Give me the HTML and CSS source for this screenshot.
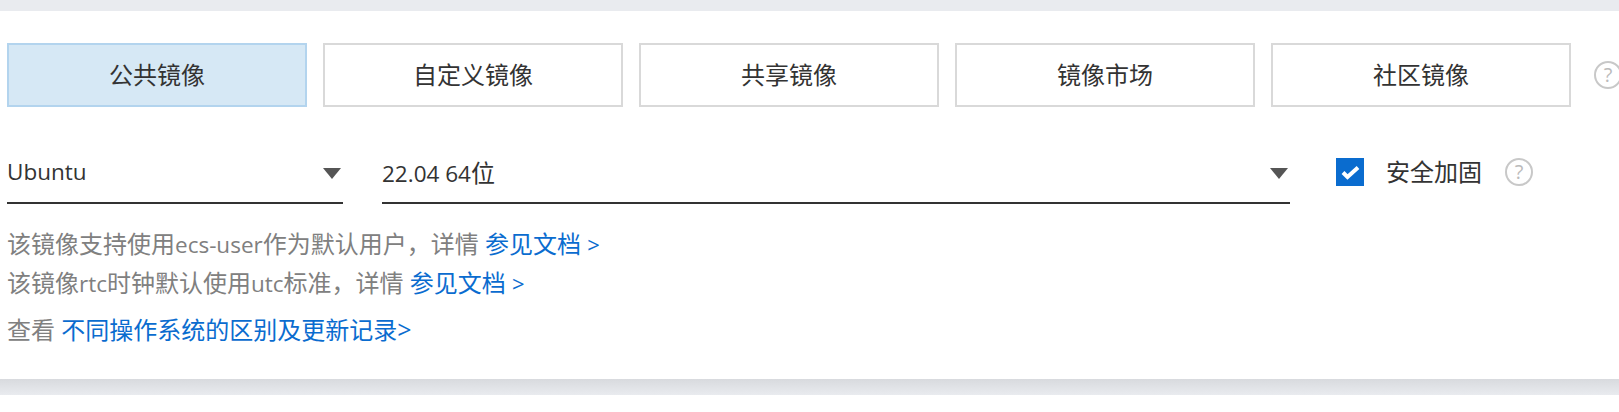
FILE: index.html
```html
<!DOCTYPE html>
<html lang="zh-CN">
<head>
	<meta charset="UTF-8">
	<title>镜像</title>
	<link rel="stylesheet" href="styles.css">
</head>
<body>
	<div class="top-band"></div>
	<div class="panel">
		<div class="tabs">
			<div class="tab active">公共镜像</div>
			<div class="tab">自定义镜像</div>
			<div class="tab">共享镜像</div>
			<div class="tab">镜像市场</div>
			<div class="tab">社区镜像</div>
			<svg class="help help-tabs" viewBox="0 0 28 28"><circle cx="14" cy="14" r="13"/><text x="14" y="21">?</text></svg>
		</div>
		<div class="selects">
			<div class="select os"><span class="lat">Ubuntu</span><i class="caret"></i></div>
			<div class="select version"><span><span class="lat">22.04 64</span>位</span><i class="caret"></i></div>
			<div class="harden">
				<svg class="check" viewBox="0 0 28 28"><rect width="28" height="28"/><path d="M7 14.5l4.5 4.5L22 9.5"/></svg>
				<span class="harden-label">安全加固</span>
				<svg class="help" viewBox="0 0 28 28"><circle cx="14" cy="14" r="13"/><text x="14" y="21">?</text></svg>
			</div>
		</div>
		<div class="notes">
			<div class="note">该镜像支持使用<span class="lat">ecs-user</span>作为默认用户，详情 <a>参见文档 <small>&gt;</small></a></div>
			<div class="note">该镜像<span class="lat">rtc</span>时钟默认使用<span class="lat">utc</span>标准，详情 <a>参见文档 <small>&gt;</small></a></div>
			<div class="note note-last">查看 <a>不同操作系统的区别及更新记录<small>&gt;</small></a></div>
		</div>
	</div>
	<div class="bottom-band"></div>
</body>
</html>
```

FILE: styles.css
```css
body{
	margin:0;
	background:#fff;
	color:#333;
	font-family:"Open Sans","Noto Sans CJK SC",sans-serif;
	font-size:24px;
	overflow:hidden;
}
.lat{
	font-size:22.5px;
}
.top-band{
	height:11px;
	background:#e9ebef;
}
.panel{
	height:368px;
	box-sizing:border-box;
	padding:32px 0 0 7px;
	background:#fff;
}
.bottom-band{
	height:16px;
	background:linear-gradient(#d8dade,#e9ebef);
}
.tabs{
	display:flex;
	align-items:center;
	gap:16px;
}
.tab{
	flex:none;
	width:300px;
	height:64px;
	box-sizing:border-box;
	border:2px solid #d9d9d9;
	line-height:60px;
	text-align:center;
}
.tab.active{
	background:#d6e8f5;
	border-color:#b3d4ee;
}
.help{
	flex:none;
	width:28px;
	height:28px;
}
.help circle{
	fill:none;
	stroke:#c8c8c8;
	stroke-width:2;
}
.help text{
	fill:#bbb;
	font-size:20px;
	text-anchor:middle;
}
.help-tabs{
	margin-left:7px;
}
.selects{
	display:flex;
	align-items:flex-start;
	margin-top:45px;
}
.select{
	display:flex;
	align-items:center;
	justify-content:space-between;
	flex:none;
	height:52px;
	box-sizing:border-box;
	padding-bottom:12px;
	border-bottom:2px solid #333;
}
.select.os{
	width:336px;
}
.select.version{
	width:908px;
	margin-left:39px;
}
.caret{
	width:0;
	height:0;
	margin:5px 2px 0 0;
	border-left:9px solid transparent;
	border-right:9px solid transparent;
	border-top:11px solid #555;
}
.harden{
	display:flex;
	align-items:center;
	height:28px;
	margin:6px 0 0 46px;
}
.check{
	width:28px;
	height:28px;
}
.check rect{
	fill:#0a6ccf;
}
.check path{
	fill:none;
	stroke:#fff;
	stroke-width:4;
}
.harden-label{
	margin:0 23px 0 22px;
	padding-bottom:3px;
}
.notes{
	margin-top:20px;
	color:#808080;
}
.note{
	height:39px;
	line-height:39px;
}
.note-last{
	margin-top:8px;
}
.note a{
	color:#0a6ccf;
}
.note small{
	font-size:22px;
}
.note-last small{
	font-size:25px;
}
```
